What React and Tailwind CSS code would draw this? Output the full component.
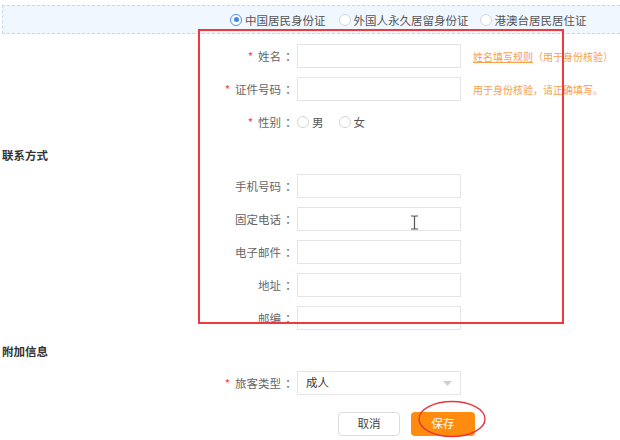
import React from "react";

const Req = () => <span className="text-[#f0453a] mr-[5px]">*</span>;

function Label({ req, children }) {
  return (
    <div className="w-[295px] shrink-0 text-right text-[#666] text-[11.5px] leading-[24px] whitespace-nowrap">
      {req && <Req />}
      {children}
      <span className="inline-block w-[14px] text-center font-['Noto_Sans_CJK_TC',sans-serif]">：</span>
    </div>
  );
}

function Field() {
  return (
    <input
      readOnly
      className="ml-[2px] w-[164px] h-[24px] border border-[#e4e4e4] bg-white outline-none"
    />
  );
}

function Row({ label, req, hint, mt = "mt-[9px]" }) {
  return (
    <div className={`flex items-center h-[24px] ${mt}`}>
      <Label req={req}>{label}</Label>
      <Field />
      {hint}
    </div>
  );
}

function Radio({ checked, label, className = "" }) {
  return (
    <div className={`flex items-center ${className}`}>
      <span
        className={`w-[12px] h-[12px] rounded-full border flex items-center justify-center bg-white ${
          checked ? "border-[#4a90e2]" : "border-[#d6d6d6]"
        }`}
      >
        {checked && <span className="w-[5px] h-[5px] rounded-full bg-[#3d8ae6]" />}
      </span>
      <span className="ml-[3px] text-[11.5px] text-[#555] leading-[14px]">{label}</span>
    </div>
  );
}

export default function App() {
  return (
    <div className="relative w-[620px] h-[440px] overflow-hidden bg-white font-['Noto_Sans_CJK_SC',sans-serif]">
      {/* ID type band */}
      <div className="mt-[5px] ml-[2px] h-[29px] border border-r-0 border-dashed border-[#c9d6ee] bg-[#f1f7ff] flex items-center pl-[227px]">
        <Radio checked label="中国居民身份证" />
        <Radio label="外国人永久居留身份证" className="ml-[13px]" />
        <Radio label="港澳台居民居住证" className="ml-[11px]" />
      </div>

      <Row
        label="姓名"
        req
        mt="mt-[10px]"
        hint={
          <div className="ml-[12px] text-[10px] text-[#f7a04b] whitespace-nowrap">
            <span className="underline">姓名填写规则</span>
            <span className="font-['Noto_Sans_CJK_TC',sans-serif]">（</span>用于身份核验
            <span className="font-['Noto_Sans_CJK_TC',sans-serif]">）</span>
          </div>
        }
      />
      <Row
        label="证件号码"
        req
        hint={
          <div className="ml-[12px] text-[10px] text-[#f7a04b] whitespace-nowrap">
            用于身份核验，请正确填写。
          </div>
        }
      />
      <div className="flex items-center h-[24px] mt-[9px]">
        <Label req>性别</Label>
        <Radio label="男" className="ml-[2px]" />
        <Radio label="女" className="ml-[15px]" />
      </div>

      <div className="mt-[13px] ml-[2px] h-[16px] leading-[16px] text-[11.5px] font-bold text-[#333]">
        联系方式
      </div>

      <Row label="手机号码" mt="mt-[11px]" />
      <Row label="固定电话" />
      <Row label="电子邮件" />
      <Row label="地址" />
      <Row label="邮编" />

      <div className="mt-[13px] ml-[2px] h-[16px] leading-[16px] text-[11.5px] font-bold text-[#333]">
        附加信息
      </div>

      <div className="flex items-center h-[24px] mt-[12px]">
        <Label req>旅客类型</Label>
        <div className="ml-[2px] w-[164px] h-[24px] border border-[#e4e4e4] bg-white flex items-center justify-between pl-[8px] pr-[8px]">
          <span className="text-[11.5px] text-[#333]">成人</span>
          <svg width="9" height="5" viewBox="0 0 9 5">
            <path d="M0 0 L9 0 L4.5 5 Z" fill="#cfcfcf" />
          </svg>
        </div>
      </div>

      <div className="flex mt-[17px] pl-[338px] gap-[11px]">
        <button className="w-[62px] h-[24px] rounded-[4px] border border-[#dcdcdc] bg-white text-[11.5px] text-[#444]">
          取消
        </button>
        <button className="w-[64px] h-[24px] rounded-[4px] bg-[#ff8c0f] text-[11.5px] text-white">
          保存
        </button>
      </div>

      {/* annotation overlays */}
      <div className="absolute left-[198px] top-[29px] w-[366px] h-[295px] border-2 border-[#f0393f] pointer-events-none" />
      <svg className="absolute left-[416px] top-[399px] pointer-events-none" width="72" height="40" viewBox="0 0 72 40">
        <ellipse cx="36" cy="20" rx="33" ry="17.5" fill="none" stroke="#e8343a" strokeWidth="1.4" />
      </svg>
      {/* text cursor */}
      <svg className="absolute left-[410px] top-[215px] pointer-events-none" width="9" height="15" viewBox="0 0 9 15">
        <path d="M1 1 H3.5 M5.5 1 H8 M4.5 1.5 V13.5 M1 14 H3.5 M5.5 14 H8 M3.5 1 Q4.5 1 4.5 2 Q4.5 1 5.5 1 M3.5 14 Q4.5 14 4.5 13 Q4.5 14 5.5 14" stroke="#555" strokeWidth="1.2" fill="none" />
      </svg>
    </div>
  );
}
